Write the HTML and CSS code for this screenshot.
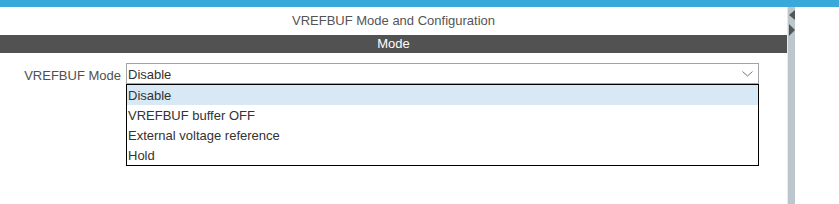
FILE: index.html
```html
<!DOCTYPE html>
<html>
<head>
<meta charset="utf-8">
<link rel="stylesheet" href="styles.css">
</head>
<body>
<div class="topbar"></div>
<div class="main">
  <div class="content">
    <div class="title">VREFBUF Mode and Configuration</div>
    <div class="section">Mode</div>
    <div class="row">
      <div class="label">VREFBUF Mode</div>
      <div class="field">
        <div class="select">
          <span>Disable</span>
          <svg class="chev" width="11" height="6" viewBox="0 0 11 6"><path d="M0.5 0.5 L5.5 5 L10.5 0.5" fill="none" stroke="#777" stroke-width="1"/></svg>
        </div>
        <div class="list">
          <div class="opt sel">Disable</div>
          <div class="opt">VREFBUF buffer OFF</div>
          <div class="opt">External voltage reference</div>
          <div class="opt">Hold</div>
        </div>
      </div>
    </div>
  </div>
  <div class="scroll">
    <svg width="8" height="30" viewBox="0 0 8 30"><path d="M7 2 L1 7 L7 12 Z" fill="#555"/><path d="M1 16 L7 22 L1 28 Z" fill="#555"/></svg>
  </div>
</div>
</body>
</html>
```
FILE: styles.css
```css
html, body { margin: 0; padding: 0; background: #fff; }
body { font-family: "Liberation Sans", Arial, sans-serif; font-size: 13px; width: 839px; height: 204px; overflow: hidden; }
.topbar { height: 7px; background: #39a8da; }
.main { display: flex; height: 197px; }
.content { width: 787px; }
.scroll { width: 8px; background: #bcc6cd; border-left: 1px solid #e6eaed; box-sizing: border-box; }
.scroll svg { display: block; margin-top: 1px; }
.title { height: 28px; line-height: 28px; text-align: center; color: #555; }
.section { height: 18px; line-height: 18px; background: #525252; color: #fff; text-align: center; }
.row { display: flex; margin-top: 10px; }
.label { width: 121px; padding-right: 5px; padding-top: 2px; text-align: right; color: #505050; line-height: 21px; box-sizing: content-box; }
.field { width: 633px; }
.select { height: 21px; border: 1px solid #a0a4a8; box-sizing: border-box; display: flex; align-items: center; justify-content: space-between; padding: 1px 5px 0 1px; color: #333; }
.chev { margin-top: 0; }
.list { border: 1px solid #000; box-sizing: border-box; height: 82px; }
.opt { height: 20px; line-height: 18px; padding-top: 2px; box-sizing: border-box; padding-left: 1px; color: #333; }
.opt.sel { background: #d9e8f5; }
```
